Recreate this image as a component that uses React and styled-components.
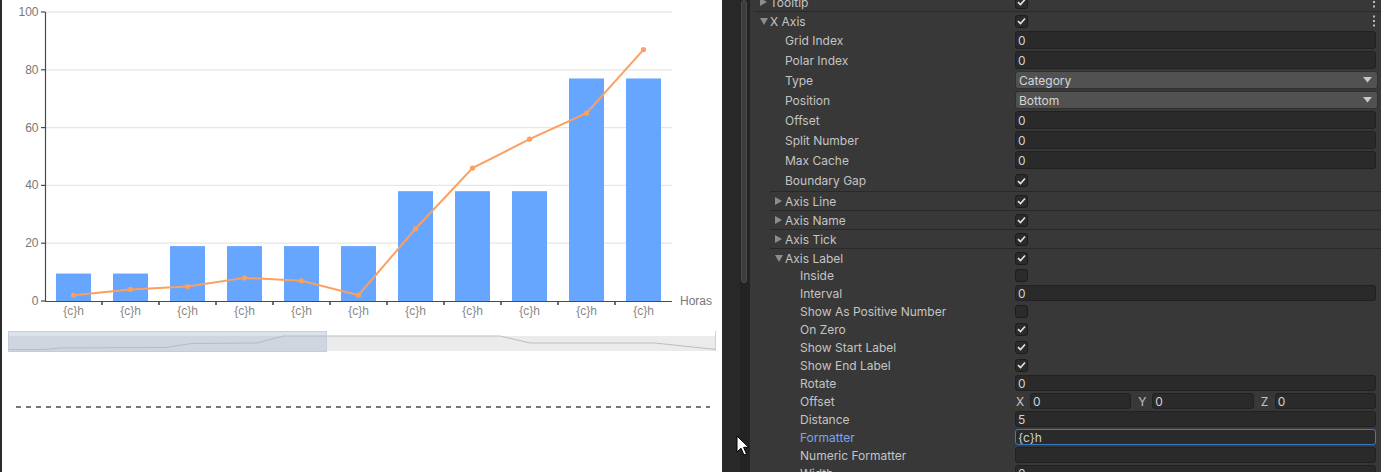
import React from "react";
import styled, { createGlobalStyle } from "styled-components";

const GlobalStyle = createGlobalStyle`
  html, body {
    margin: 0;
    padding: 0;
    overflow: hidden;
    background: #383838;
  }
  #root {
    height: 472px;
  }
`;

const Screen = styled.div`
  position: relative;
  display: flex;
  width: 1381px;
  height: 472px;
  overflow: hidden;
  font-family: Inter, "Noto Sans", sans-serif;
`;

const ChartPane = styled.div`
  flex: none;
  width: 720px;
  background: #ffffff;
  border-left: 2px solid #2b2b2b;
  display: flex;
  flex-direction: column;
`;

const ChartSvg = styled.svg`
  display: block;
  font-family: "Liberation Sans", Arial, sans-serif;
  font-size: 12px;
`;

const Divider = styled.div`
  height: 2px;
  margin: 46px 12px 0 14px;
  background: repeating-linear-gradient(to right, #777 0 5px, transparent 5px 10px);
`;

const Gutter = styled.div`
  flex: none;
  width: 28px;
  background: #282828;
  display: flex;
  justify-content: flex-end;
`;

const ScrollTrack = styled.div`
  width: 10px;
  background: #232323;
  padding-left: 1px;
  box-sizing: border-box;
`;

const ScrollThumb = styled.div`
  width: 6px;
  height: 283px;
  box-sizing: border-box;
  background: #3d3d3d;
  border: 1px solid #4b4b4b;
  border-radius: 3px;
`;

const Inspector = styled.div`
  flex: 1;
  background: #383838;
  color: #c4c4c4;
  font-size: 12px;
`;

const List = styled.div`
  margin-top: -8px;
  display: flex;
  flex-direction: column;
`;

const Row = styled.div`
  position: relative;
  display: flex;
  align-items: stretch;
  height: ${(p) => p.$h}px;
  box-sizing: border-box;
  padding-top: ${(p) => (p.$sep != null ? 1 : 0)}px;

  &::before {
    content: "";
    display: ${(p) => (p.$sep != null ? "block" : "none")};
    position: absolute;
    top: 0;
    left: ${(p) => p.$sep || 0}px;
    right: 0;
    height: 1px;
    background: #292929;
  }
`;

const Label = styled.div`
  flex: none;
  width: 265px;
  box-sizing: border-box;
  padding-left: ${(p) => p.$indent}px;
  display: flex;
  align-items: center;
  white-space: nowrap;
  color: ${(p) => (p.$focus ? "#7aa6ec" : "#c4c4c4")};
`;

const Arrow = styled.span`
  width: 10px;
  display: flex;
  align-items: center;
`;

const Value = styled.div`
  flex: 1;
  display: flex;
  align-items: center;
  justify-content: ${(p) => (p.$menu ? "space-between" : "flex-start")};
  padding-right: 5px;
  min-width: 0;
`;

const Field = styled.div`
  flex: 1;
  align-self: stretch;
  margin: 1px 0;
  box-sizing: border-box;
  display: flex;
  align-items: center;
  padding: 0 2px;
  background: #2a2a2a;
  border: 1px solid ${(p) => (p.$focus ? "#3a79c4" : "#212121")};
  border-radius: 3px;
  color: #d2d2d2;
  white-space: nowrap;
`;

const Select = styled(Field)`
  justify-content: space-between;
  padding: 0 5px 0 3px;
  margin-right: -2px;
  background: #515151;
  border-color: #303030;
  color: #d6d6d6;
`;

const AxisGroup = styled.div`
  flex: 1;
  display: flex;
  align-items: stretch;
  align-self: stretch;
`;

const AxisTag = styled.span`
  width: 14px;
  flex: none;
  display: flex;
  align-items: center;
  padding-left: 1px;
  color: #c4c4c4;
`;

const XYZ = styled.div`
  flex: 1;
  align-self: stretch;
  display: flex;
  gap: 6px;
`;

const Check = styled.div`
  width: 13px;
  height: 13px;
  box-sizing: border-box;
  background: #2b2b2b;
  border: 1px solid #1c1c1c;
  border-radius: 3px;
  display: flex;
  align-items: center;
  justify-content: center;
`;

const Cursor = styled.svg`
  position: absolute;
  left: 736px;
  top: 435px;
`;

const bars = [9.5, 9.5, 19, 19, 19, 19, 38, 38, 38, 77, 77];
const line = [2, 4, 5, 8, 7, 2, 25, 46, 56, 65, 87];
const yOf = (v) => 301 - v * 2.89;
const cx = (i) => 73.5 + 57 * i;

const shadow = "8,349.5 45,349.5 60,348 165,347.5 192,343.5 257,343 283,336 500,336 530,343 655,343 716,349.5";

const Chart = () => (
  <ChartSvg width="720" height="360" viewBox="2 0 720 360">
    {[20, 40, 60, 80, 100].map((v) => (
      <line key={v} x1="45" x2="672" y1={yOf(v)} y2={yOf(v)} stroke="#e6e6e6" strokeWidth="1.3" />
    ))}
    {bars.map((v, i) => (
      <rect key={i} x={cx(i) - 17.5} y={yOf(v)} width="35" height={301 - yOf(v)} fill="#66a6ff" />
    ))}
    <line x1="45.5" x2="45.5" y1="12" y2="301" stroke="#4a4a4a" strokeWidth="1.2" />
    <line x1="45" x2="672" y1="301.5" y2="301.5" stroke="#4a4a4a" strokeWidth="1.2" />
    {[0, 20, 40, 60, 80, 100].map((v) => (
      <g key={v}>
        <line x1="41" x2="45" y1={yOf(v)} y2={yOf(v)} stroke="#4a4a4a" strokeWidth="1.2" />
        <text x="38.5" y={yOf(v) + 4} textAnchor="end" fill="#777">{v}</text>
      </g>
    ))}
    {Array.from({ length: 10 }, (_, k) => (
      <line key={k} x1={102 + 57 * k} x2={102 + 57 * k} y1="301" y2="305" stroke="#4a4a4a" strokeWidth="1.6" />
    ))}
    {bars.map((_, i) => (
      <text key={i} x={cx(i)} y="315" textAnchor="middle" fill="#888">{"{c}h"}</text>
    ))}
    <text x="680" y="305" fill="#777">Horas</text>
    <polyline points={line.map((v, i) => `${cx(i)},${yOf(v)}`).join(" ")} fill="none" stroke="#fc9f5f" strokeWidth="2" />
    {line.map((v, i) => (
      <circle key={i} cx={cx(i)} cy={yOf(v)} r="2.6" fill="#fc9f5f" />
    ))}
    <rect x="8" y="336" width="708" height="15" fill="#ebebeb" />
    <polyline points={shadow} fill="none" stroke="#b7bec8" strokeWidth="1" />
    <rect x="8.5" y="331.5" width="318" height="20" fill="rgba(167,183,204,0.4)" stroke="#c5cdd8" strokeWidth="1" />
    <line x1="715.5" x2="715.5" y1="331" y2="351" stroke="#cfcfcf" strokeWidth="1" />
  </ChartSvg>
);

const Tri = ({ open }) =>
  open ? (
    <svg width="8" height="7" viewBox="0 0 8 7">
      <polygon points="0,0 8,0 4,7" fill="#8c8c8c" />
    </svg>
  ) : (
    <svg width="7" height="8" viewBox="0 0 7 8">
      <polygon points="0,0 7,4 0,8" fill="#8c8c8c" />
    </svg>
  );

const Tick = () => (
  <svg width="9" height="8" viewBox="0 0 9 8">
    <path d="M1 4.2 L3.5 6.6 L8 1.4" fill="none" stroke="#e4e4e4" strokeWidth="1.6" />
  </svg>
);

const Kebab = () => (
  <svg width="4" height="12" viewBox="0 0 4 12">
    <rect x="1" y="0.5" width="2" height="2" fill="#bdbdbd" />
    <rect x="1" y="5" width="2" height="2" fill="#bdbdbd" />
    <rect x="1" y="9.5" width="2" height="2" fill="#bdbdbd" />
  </svg>
);

const rows = [
  { label: "Tooltip", level: 0, fold: "closed", h: 19, sep: 5, kind: "check", on: true, menu: true },
  { label: "X Axis", level: 0, fold: "open", h: 19, sep: 5, kind: "check", on: true, menu: true },
  { label: "Grid Index", level: 1, h: 20, kind: "field", text: "0" },
  { label: "Polar Index", level: 1, h: 20, kind: "field", text: "0" },
  { label: "Type", level: 1, h: 20, kind: "select", text: "Category" },
  { label: "Position", level: 1, h: 20, kind: "select", text: "Bottom" },
  { label: "Offset", level: 1, h: 20, kind: "field", text: "0" },
  { label: "Split Number", level: 1, h: 20, kind: "field", text: "0" },
  { label: "Max Cache", level: 1, h: 20, kind: "field", text: "0" },
  { label: "Boundary Gap", level: 1, h: 21, kind: "check", on: true },
  { label: "Axis Line", level: 1, fold: "closed", h: 19, sep: 20, kind: "check", on: true },
  { label: "Axis Name", level: 1, fold: "closed", h: 19, sep: 20, kind: "check", on: true },
  { label: "Axis Tick", level: 1, fold: "closed", h: 19, sep: 20, kind: "check", on: true },
  { label: "Axis Label", level: 1, fold: "open", h: 19, sep: 20, kind: "check", on: true },
  { label: "Inside", level: 2, h: 17, kind: "check", on: false },
  { label: "Interval", level: 2, h: 18, kind: "field", text: "0" },
  { label: "Show As Positive Number", level: 2, h: 18, kind: "check", on: false },
  { label: "On Zero", level: 2, h: 18, kind: "check", on: true },
  { label: "Show Start Label", level: 2, h: 18, kind: "check", on: true },
  { label: "Show End Label", level: 2, h: 18, kind: "check", on: true },
  { label: "Rotate", level: 2, h: 18, kind: "field", text: "0" },
  { label: "Offset", level: 2, h: 18, kind: "xyz" },
  { label: "Distance", level: 2, h: 18, kind: "field", text: "5" },
  { label: "Formatter", level: 2, h: 18, kind: "field", text: "{c}h", focus: true },
  { label: "Numeric Formatter", level: 2, h: 18, kind: "field", text: "" },
  { label: "Width", level: 2, h: 18, kind: "field", text: "0" },
];

const renderValue = (r) => {
  switch (r.kind) {
    case "check":
      return <Check>{r.on && <Tick />}</Check>;
    case "select":
      return (
        <Select>
          <span>{r.text}</span>
          <svg width="9" height="6" viewBox="0 0 9 6">
            <polygon points="0,0 9,0 4.5,5.5" fill="#c8c8c8" />
          </svg>
        </Select>
      );
    case "xyz":
      return (
        <XYZ>
          {["X", "Y", "Z"].map((a) => (
            <AxisGroup key={a}>
              <AxisTag>{a}</AxisTag>
              <Field>0</Field>
            </AxisGroup>
          ))}
        </XYZ>
      );
    default:
      return <Field $focus={r.focus}>{r.text}</Field>;
  }
};

const PropertyRow = ({ r }) => (
  <Row $h={r.h} $sep={r.sep}>
    <Label $indent={20 + 15 * r.level - (r.fold ? 10 : 0)} $focus={r.focus}>
      {r.fold && (
        <Arrow>
          <Tri open={r.fold === "open"} />
        </Arrow>
      )}
      {r.label}
    </Label>
    <Value $menu={r.menu}>
      {renderValue(r)}
      {r.menu && <Kebab />}
    </Value>
  </Row>
);

export default function App() {
  return (
    <>
      <GlobalStyle />
      <Screen>
        <ChartPane>
          <Chart />
          <Divider />
        </ChartPane>
        <Gutter>
          <ScrollTrack>
            <ScrollThumb />
          </ScrollTrack>
        </Gutter>
        <Inspector>
          <List>
            {rows.map((r, i) => (
              <PropertyRow key={i} r={r} />
            ))}
          </List>
        </Inspector>
        <Cursor width="14" height="22" viewBox="0 0 14 22">
          <polygon points="1,1 1,17 5,13.2 8,20 10.5,19 7.6,12.3 12.6,12.3" fill="#fff" stroke="#000" strokeWidth="1" />
        </Cursor>
      </Screen>
    </>
  );
}
